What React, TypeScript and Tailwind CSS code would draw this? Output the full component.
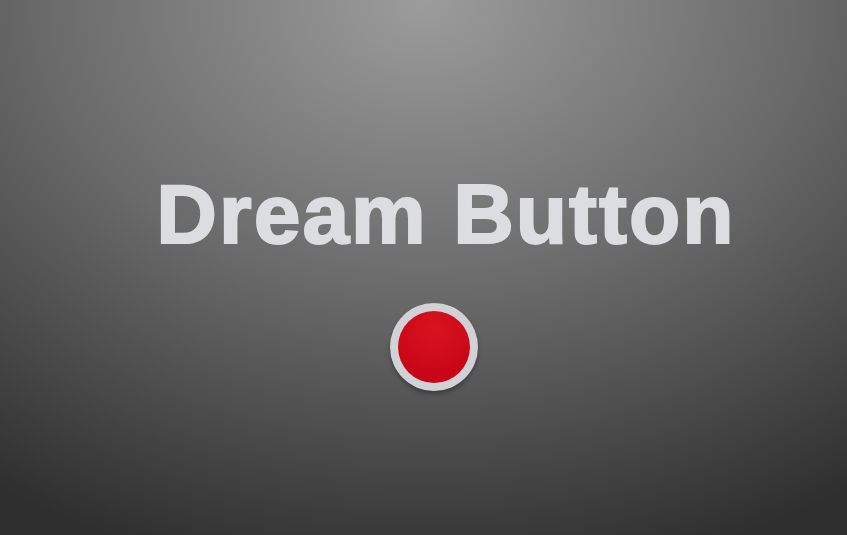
export default function App() {
  return (
    <div className="h-[535px] w-full overflow-hidden bg-[radial-gradient(ellipse_90%_110%_at_50%_0%,#9c9c9c_0%,#6a6a6a_50%,#2f2f2f_100%)]">
      <div className="flex flex-col items-center pt-[166px]">
        <h1 className="ml-[45px] text-[84px] font-bold leading-[96px] tracking-[2px] text-[#dcdde0] [-webkit-text-stroke:2px_#dcdde0] [font-family:'Liberation_Sans',Arial,sans-serif]">
          Dream Button
        </h1>
        <button
          type="button"
          className="mt-[41px] ml-[21px] flex h-[88px] w-[88px] items-center justify-center rounded-full bg-[#d1d2d6] shadow-[0_3px_4px_rgba(0,0,0,0.3)]"
        >
          <span className="h-[72px] w-[72px] rounded-full bg-[radial-gradient(circle_at_50%_25%,#d8141f,#c90617_70%)]" />
        </button>
      </div>
    </div>
  );
}
